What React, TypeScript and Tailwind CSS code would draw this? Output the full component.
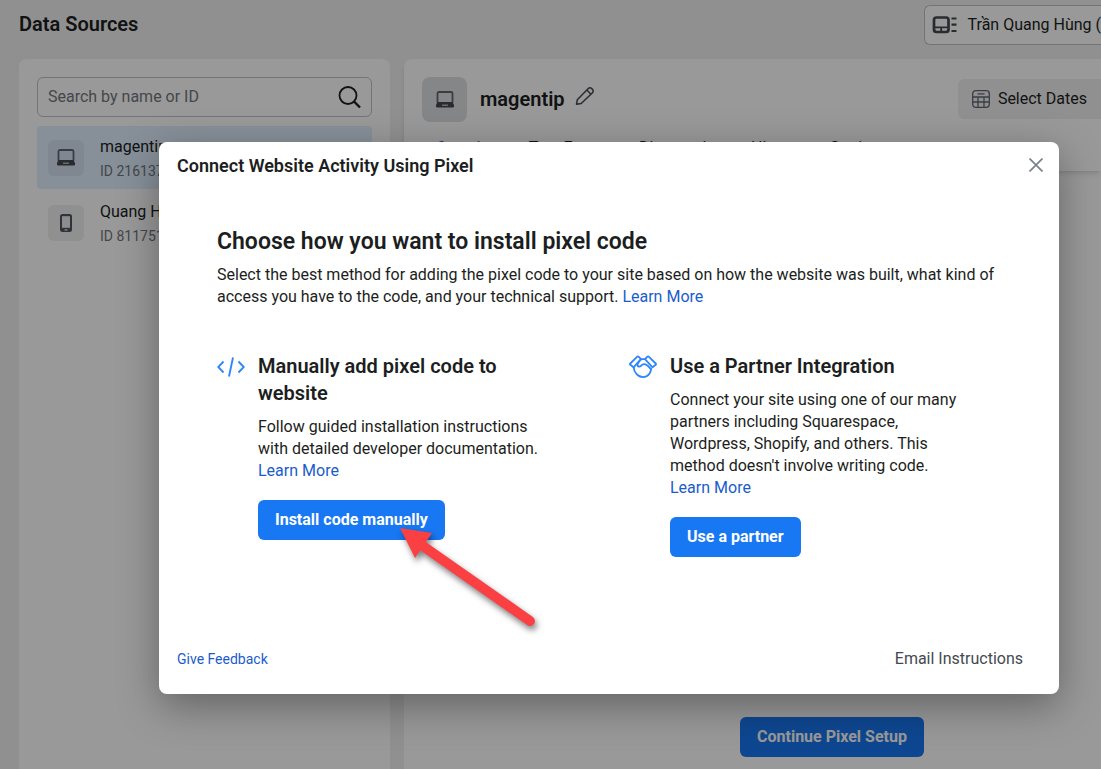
import React from "react";

const LaptopIcon = () => (
  <svg width="20" height="18" viewBox="0 0 20 18" aria-hidden="true">
    <rect x="2.5" y="1" width="15" height="11.5" rx="1.5" fill="none" stroke="#606770" strokeWidth="1.8" />
    <path d="M2.500 11h15l1.500 3v1.300a1.200 1.200 0 0 1-1.200 1.200H2.200A1.200 1.200 0 0 1 1 15.300V14z" fill="#444950" />
    <path d="M7 14.200h6" stroke="#bec3c9" strokeWidth="1.300" />
  </svg>
);

const PhoneIcon = () => (
  <svg width="14" height="20" viewBox="0 0 14 20" aria-hidden="true">
    <rect x="1" y="1" width="12" height="18" rx="2.5" fill="#50555c" />
    <rect x="3" y="3.2" width="8" height="11.6" fill="#e9ebee" />
    <path d="M5.500 17h3" stroke="#e9ebee" strokeWidth="1.200" />
  </svg>
);

const SearchIcon = () => (
  <svg width="24" height="24" viewBox="0 0 24 24" fill="none" stroke="#1c1e21" aria-hidden="true">
    <circle cx="11" cy="10.500" r="8.500" strokeWidth="1.800" />
    <path d="M17 16.500l6 6" strokeWidth="2.400" />
  </svg>
);

const PencilIcon = () => (
  <svg width="20" height="20" viewBox="0 0 20 20" fill="none" stroke="#444950" strokeWidth="1.500" strokeLinejoin="round" aria-hidden="true">
    <path d="M1.500 18.200l.8-4.500L13.300 2.500a2.300 2.300 0 0 1 3.300 0l.9.900a2.300 2.300 0 0 1 0 3.300L6.200 17.500z" />
    <path d="M11.800 4l4.200 4.200" />
  </svg>
);

const AccountIcon = () => (
  <svg width="26" height="20" viewBox="0 0 26 20" fill="none" stroke="#444950" aria-hidden="true">
    <rect x="2" y="2.500" width="14.500" height="14.500" rx="2.500" strokeWidth="2.700" />
    <path d="M3 12.300h12.500M9.200 12.300v4" strokeWidth="1.800" />
    <path d="M19.500 3.500h5M19.500 9.700h5M19.500 16h5" strokeWidth="2.200" />
  </svg>
);

const CalendarIcon = () => (
  <svg width="18" height="18" viewBox="0 0 18 18" fill="none" stroke="#606770" strokeWidth="1.300" aria-hidden="true">
    <rect x="0.700" y="0.700" width="16.600" height="16.600" rx="3" />
    <path d="M1 7h16M1 12h16M6 7v10M12 7v10M5.500 3.900h7" />
  </svg>
);

const CodeIcon = () => (
  <svg width="28" height="22" viewBox="0 0 28 22" fill="none" stroke="#2e86fa" strokeWidth="1.900" aria-hidden="true">
    <path d="M6.500 5.500L1.200 11l5.300 5.500M21.500 5.500l5.300 5.500-5.300 5.500M16 1.500l-4 19" />
  </svg>
);

const HandshakeIcon = () => (
  <svg width="28" height="24" viewBox="0 0 28 24" fill="none" stroke="#2e86fa" strokeWidth="1.800" strokeLinecap="round" strokeLinejoin="round" aria-hidden="true">
    <path d="M1.300 8.500L8 1.800q.9-.9 1.800 0l2.200 2.400-7.500 8.100-3.200-2.500q-.7-.6 0-1.300z" />
    <path d="M26.700 8.500L20 1.800q-.9-.9-1.800 0L16 4.200l7.500 8.100 3.200-2.500q.7-.6 0-1.300z" />
    <path d="M16 4.200h-3.200q-1.200.2-2.200 1.600l-2 3.100q-.6 2.200 1.200 2.700 1.900.2 3.300-1.800 1.500-.8 3.300-.5 2.600.9 5.300 4.600" />
    <path d="M4.700 12.300c.2 3 1 5 2.700 6.600 1.800 2 4 3.200 6.600 3.200 2.500 0 4.800-1 6.200-3 1.100-1.400 1.700-3 2-5.200" />
  </svg>
);

const Arrow = () => (
  <svg width="150" height="120" viewBox="0 0 150 120" className="pointer-events-none absolute top-[23px] left-[137px] drop-shadow-[2px_4px_3px_rgba(0,0,0,0.5)]" aria-hidden="true">
    <path d="M25 21L135 98" stroke="#fb4044" strokeWidth="10" strokeLinecap="round" />
    <path d="M5 5L37 10L20 35z" fill="#fb4044" />
  </svg>
);

const sources = [
  { name: "magentip", id: "ID 216137", icon: <LaptopIcon />, style: "bg-[#e1f0ff]", box: "bg-[#d5e2f0]" },
  { name: "Quang Hùng", id: "ID 811751", icon: <PhoneIcon />, style: "", box: "bg-[#f0f0f0]" },
];

const Sidebar = () => (
  <aside className="w-[371px] shrink-0 rounded-t-lg bg-white px-[18px] pt-[18px]">
    <div className="flex h-10 items-center rounded-md border border-[#bec3c9] px-2.5">
      <input
        aria-label="Search by name or ID"
        placeholder="Search by name or ID"
        className="min-w-0 flex-1 outline-none placeholder:text-[#73777d]"
      />
      <button aria-label="Search">
        <SearchIcon />
      </button>
    </div>
    <ul className="mt-[9px]">
      {sources.map((s) => (
        <li key={s.id} className={`mb-[2px] flex h-[63px] items-center gap-4 rounded-sm px-[11px] ${s.style}`}>
          <span className={`flex size-9 items-center justify-center rounded-md ${s.box}`}>{s.icon}</span>
          <span className="pt-0.5">
            <span className="block leading-6">{s.name}</span>
            <span className="block text-sm leading-6 text-[#73777d]">{s.id}</span>
          </span>
        </li>
      ))}
    </ul>
  </aside>
);

const Content = () => (
  <main className="flex min-w-0 flex-1 flex-col rounded-tl-lg bg-white">
    <div className="h-28 rounded-tl-lg pt-[18px] pl-[18px] shadow-md">
      <div className="flex items-center">
        <span className="flex size-[45px] items-center justify-center rounded-lg bg-[#dddfe2]">
          <LaptopIcon />
        </span>
        <h2 className="ml-[13px] pb-0.5 text-xl font-semibold">magentip</h2>
        <button aria-label="Edit name" className="ml-2.5 pb-2">
          <PencilIcon />
        </button>
        <button className="mb-0.5 ml-auto flex h-10 items-center gap-2 rounded-l-md bg-[#f0f0f0] px-3.5">
          <CalendarIcon />
          Select Dates
        </button>
      </div>
      <nav className="mt-3.5 flex gap-7 pl-3.5 leading-6">
        <a href="#" className="text-[#1b5ccc]">Overview</a>
        <a href="#">Test Events</a>
        <a href="#">Diagnostics</a>
        <a href="#">History</a>
        <a href="#">Settings</a>
      </nav>
    </div>
    <div className="flex flex-1 items-end justify-center pr-[13px] pb-3 pl-[172px]">
      <button className="h-10 rounded-md bg-[#1877f2] px-[17px] font-bold text-white">Continue Pixel Setup</button>
    </div>
  </main>
);

const LearnMore = () => (
  <a href="#" className="text-[#1b5ccc]">Learn More</a>
);

const Modal = () => (
  <div role="dialog" aria-labelledby="modal-title" className="w-full rounded-lg bg-white shadow-[0_12px_40px_rgba(0,0,0,0.35)]">
    <header className="flex h-12 items-center justify-between pr-4 pl-[18px]">
      <h2 id="modal-title" className="text-lg font-semibold">Connect Website Activity Using Pixel</h2>
      <button aria-label="Close" className="pb-0.5">
        <svg width="14" height="14" viewBox="0 0 14 14" stroke="#7b828c" strokeWidth="1.700" aria-hidden="true">
          <path d="M0.500 0.500l13 13M13.500 0.500l-13 13" />
        </svg>
      </button>
    </header>
    <section className="px-[58px] pt-[37px]">
      <h3 className="text-[23px] leading-[30px] font-semibold">Choose how you want to install pixel code</h3>
      <p className="mt-[7px] leading-[22px]">
        Select the best method for adding the pixel code to your site based on how the website was built, what kind of
        access you have to the code, and your technical support. <LearnMore />
      </p>
      <div className="mt-[45px] grid h-[270px] grid-cols-2 gap-10">
        <div className="flex gap-[13px]">
          <span className="shrink-0 pt-[3px]">
            <CodeIcon />
          </span>
          <div className="max-w-[290px]">
            <h4 className="text-xl leading-[27px] font-semibold">Manually add pixel code to website</h4>
            <p className="mt-[9px] leading-[22px]">
              Follow guided installation instructions with detailed developer documentation. <LearnMore />
            </p>
            <div className="relative mt-[18px] w-fit">
              <button className="h-10 rounded-md bg-[#1877f2] px-[17px] font-bold text-white">Install code manually</button>
              <Arrow />
            </div>
          </div>
        </div>
        <div className="flex gap-[13px]">
          <span className="shrink-0 pt-[2px]">
            <HandshakeIcon />
          </span>
          <div className="max-w-[290px]">
            <h4 className="text-xl leading-[27px] font-semibold">Use a Partner Integration</h4>
            <p className="mt-[9px] leading-[22px]">
              Connect your site using one of our many partners including Squarespace, Wordpress, Shopify, and others.
              This method doesn't involve writing code. <LearnMore />
            </p>
            <button className="mt-[18px] h-10 rounded-md bg-[#1877f2] px-[17px] font-bold text-white">Use a partner</button>
          </div>
        </div>
      </div>
    </section>
    <footer className="flex h-[71px] items-center justify-between pt-px pr-9 pl-[18px]">
      <a href="#" className="text-sm text-[#1b5ccc]">Give Feedback</a>
      <button className="text-[#444950]">Email Instructions</button>
    </footer>
  </div>
);

export default function App() {
  return (
    <div className="relative flex h-screen flex-col overflow-hidden bg-[#f0f0f0] font-['Roboto',sans-serif] text-base text-[#1c1e21]">
      <header className="flex h-[59px] shrink-0 items-start justify-between pl-[19px]">
        <h1 className="pt-2.5 text-xl font-semibold">Data Sources</h1>
        <button className="mt-[5px] flex h-10 items-center gap-2.5 rounded-l-md border border-r-0 border-[#bec3c9] bg-white pl-[7px] whitespace-nowrap">
          <AccountIcon />
          Trần Quang Hùng (
        </button>
      </header>
      <div className="flex flex-1 gap-3.5 pl-[19px]">
        <Sidebar />
        <Content />
      </div>
      <div className="absolute inset-0 bg-black/40 pt-[142px] pr-[42px] pl-[159px]">
        <Modal />
      </div>
    </div>
  );
}
